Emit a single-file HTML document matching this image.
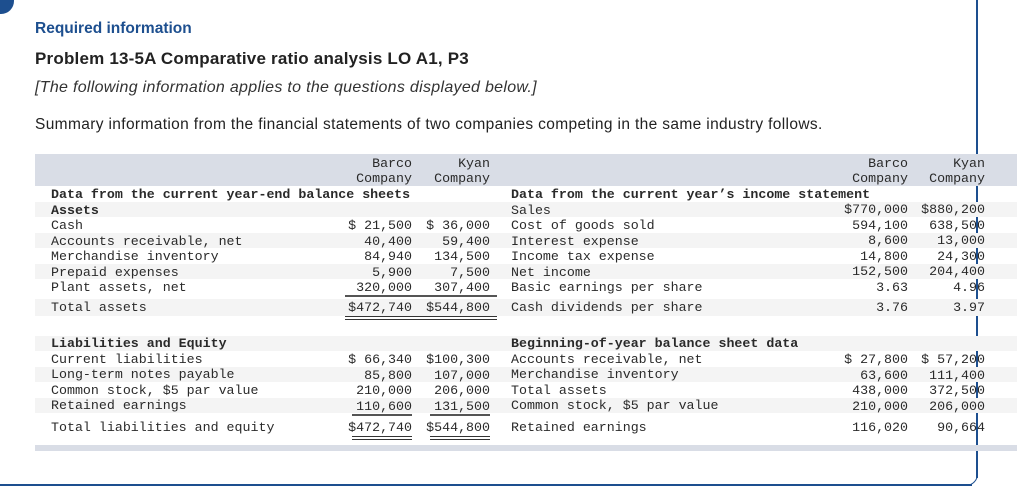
<!DOCTYPE html>
<html><head><meta charset="utf-8"><style>
*{margin:0;padding:0;box-sizing:border-box}
body{width:1024px;height:498px;background:#fff;position:relative;overflow:hidden;font-family:"Liberation Sans",sans-serif;color:#222}
.a{position:absolute;white-space:pre}
.m{font-family:"Liberation Mono",monospace;font-size:13.3px;line-height:15px;color:#2a2a2a}
.b{font-weight:bold}
.r{text-align:right}
.bg{position:absolute;background:#f4f4f4;height:15px}
.ln{position:absolute;height:1.5px;background:#555}
</style></head><body>
<div class="a" style="left:-12px;top:-12px;width:26px;height:26px;border-radius:50%;background:#1d4f8f"></div>
<div class="a" style="left:976px;top:0;width:1.5px;height:478px;background:#1d4f8f"></div>
<div class="a" style="left:0;top:484px;width:972px;height:1.5px;background:#1d4f8f"></div>
<div class="a" style="left:962px;top:470px;width:16px;height:16px;border-right:1.5px solid #1d4f8f;border-bottom:1.5px solid #1d4f8f;border-bottom-right-radius:12px"></div>

<div class="a b" style="left:35px;top:20px;font-size:15.5px;color:#1d4f8f">Required information</div>
<div class="a b" style="left:35px;top:49px;font-size:17px;letter-spacing:0.2px;color:#222">Problem 13-5A Comparative ratio analysis LO A1, P3</div>
<div class="a" style="left:35px;top:79px;font-size:16px;letter-spacing:0.3px;font-style:italic;color:#333">[The following information applies to the questions displayed below.]</div>
<div class="a" style="left:35px;top:116px;font-size:15.5px;letter-spacing:0.36px;color:#222">Summary information from the financial statements of two companies competing in the same industry follows.</div>

<div class="a" style="left:35px;top:154px;width:982px;height:32px;background:#d9dde6"></div>
<div class="a" style="left:35px;top:445px;width:982px;height:6px;background:#d9dde6"></div>

<div class="bg" style="left:35px;top:202px;width:982px"></div>
<div class="bg" style="left:35px;top:233px;width:982px"></div>
<div class="bg" style="left:35px;top:264px;width:982px"></div>
<div class="bg" style="left:35px;top:299px;width:982px;height:17px"></div>
<div class="bg" style="left:35px;top:336px;width:982px"></div>
<div class="bg" style="left:35px;top:367px;width:982px"></div>
<div class="bg" style="left:35px;top:398px;width:982px"></div>

<div class="a m r" style="left:300px;top:156px;width:112px">Barco
Company</div>
<div class="a m r" style="left:400px;top:156px;width:90px">Kyan
Company</div>
<div class="a m r" style="left:800px;top:156px;width:108px">Barco
Company</div>
<div class="a m r" style="left:890px;top:156px;width:95px">Kyan
Company</div>

<div class="a m" style="left:51px;top:187px;line-height:15.5px"><b>Data from the current year-end balance sheets</b>
<b>Assets</b>
Cash
Accounts receivable, net
Merchandise inventory
Prepaid expenses
Plant assets, net</div>
<div class="a m r" style="left:300px;top:218px;width:112px;line-height:15.5px">$ 21,500
40,400
84,940
5,900
320,000</div>
<div class="a m r" style="left:400px;top:218px;width:90px;line-height:15.5px">$ 36,000
59,400
134,500
7,500
307,400</div>
<div class="ln" style="left:345px;top:295px;width:152px"></div>
<div class="a m" style="left:51px;top:300px">Total assets</div>
<div class="a m r" style="left:300px;top:300px;width:112px">$472,740</div>
<div class="a m r" style="left:400px;top:300px;width:90px">$544,800</div>
<div class="a" style="left:345px;top:316px;width:152px;height:4px;border-top:1.3px solid #333;border-bottom:1.3px solid #333"></div>

<div class="a m" style="left:511px;top:187px;line-height:15.5px"><b>Data from the current year’s income statement</b>
Sales
Cost of goods sold
Interest expense
Income tax expense
Net income
Basic earnings per share</div>
<div class="a m r" style="left:800px;top:202px;width:108px;line-height:15.5px">$770,000
594,100
8,600
14,800
152,500
3.63</div>
<div class="a m r" style="left:880px;top:202px;width:105px;line-height:15.5px">$880,200
638,500
13,000
24,300
204,400
4.96</div>
<div class="a m" style="left:511px;top:300px">Cash dividends per share</div>
<div class="a m r" style="left:800px;top:300px;width:108px">3.76</div>
<div class="a m r" style="left:880px;top:300px;width:105px">3.97</div>

<div class="a m" style="left:51px;top:336px;line-height:15.5px"><b>Liabilities and Equity</b>
Current liabilities
Long-term notes payable
Common stock, $5 par value
Retained earnings</div>
<div class="a m r" style="left:300px;top:352px;width:112px;line-height:15.5px">$ 66,340
85,800
210,000
110,600</div>
<div class="a m r" style="left:400px;top:352px;width:90px;line-height:15.5px">$100,300
107,000
206,000
131,500</div>
<div class="ln" style="left:352px;top:414px;width:60px"></div>
<div class="ln" style="left:430px;top:414px;width:60px"></div>
<div class="a m" style="left:51px;top:420px">Total liabilities and equity</div>
<div class="a m r" style="left:300px;top:420px;width:112px">$472,740</div>
<div class="a m r" style="left:400px;top:420px;width:90px">$544,800</div>
<div class="a" style="left:352px;top:436px;width:60px;height:4px;border-top:1.3px solid #333;border-bottom:1.3px solid #333"></div>
<div class="a" style="left:430px;top:436px;width:60px;height:4px;border-top:1.3px solid #333;border-bottom:1.3px solid #333"></div>

<div class="a m" style="left:511px;top:336px;line-height:15.5px"><b>Beginning-of-year balance sheet data</b>
Accounts receivable, net
Merchandise inventory
Total assets
Common stock, $5 par value</div>
<div class="a m r" style="left:800px;top:352px;width:108px;line-height:15.5px">$ 27,800
63,600
438,000
210,000</div>
<div class="a m r" style="left:880px;top:352px;width:105px;line-height:15.5px">$ 57,200
111,400
372,500
206,000</div>
<div class="a m" style="left:511px;top:420px">Retained earnings</div>
<div class="a m r" style="left:800px;top:420px;width:108px">116,020</div>
<div class="a m r" style="left:880px;top:420px;width:105px">90,664</div>
</body></html>
